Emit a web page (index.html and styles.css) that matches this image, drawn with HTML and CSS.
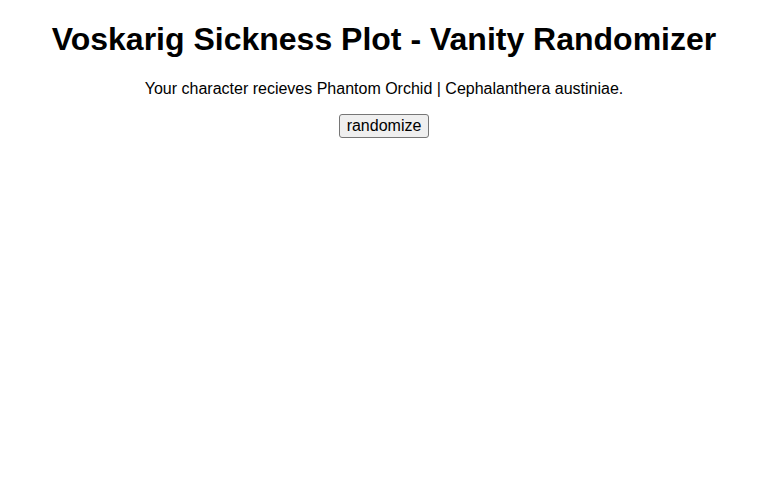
FILE: index.html
```html
<!DOCTYPE html>
<html>
<head>
<meta charset="utf-8">
<link rel="stylesheet" href="styles.css">
</head>
<body>
<div class="page">
  <h1 class="title">Voskarig Sickness Plot - Vanity Randomizer</h1>
  <p class="result">Your character recieves Phantom Orchid | Cephalanthera austiniae.</p>
  <div class="actions"><button class="btn">randomize</button></div>
</div>
</body>
</html>
```
FILE: styles.css
```css
body {
  margin: 0;
  font-family: "Liberation Sans", Arial, sans-serif;
  background: #fff;
  color: #000;
}
.page {
  text-align: center;
  padding-top: 21px;
}
.title {
  font-size: 32px;
  font-weight: bold;
  margin: 0 0 22px;
}
.result {
  font-size: 16px;
  margin: 0 0 16px;
}
.actions {
  display: flex;
  justify-content: center;
}
.btn {
  font-family: "Liberation Sans", Arial, sans-serif;
  font-size: 16px;
  line-height: normal;
  padding: 2px 7px;
  border: 1px solid #767676;
  border-radius: 3px;
  background: #efefef;
  color: #000;
}
```
